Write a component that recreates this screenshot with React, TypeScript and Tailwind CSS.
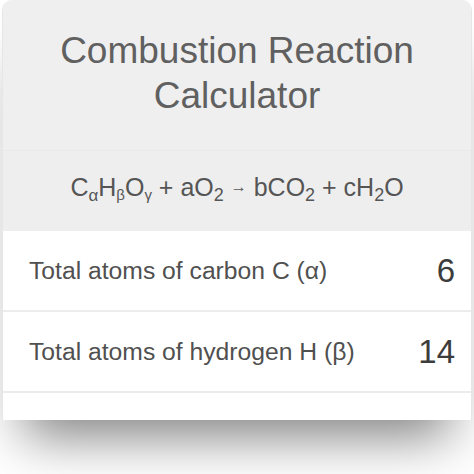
export default function App() {
  const rows = [
    { label: "Total atoms of carbon C (α)", value: "6" },
    { label: "Total atoms of hydrogen H (β)", value: "14" },
    { label: "Total atoms of oxygen O (γ)", value: "0" },
  ];

  return (
    <div
      className="h-[474px] w-[474px] overflow-hidden bg-white"
      style={{ fontFamily: '"Liberation Sans", Arial, sans-serif' }}
    >
      <div className="mx-[2px] h-[420px] overflow-hidden rounded-t-[10px] border-x border-[#e6e6e6] bg-white shadow-[0_38px_50px_-22px_rgba(0,0,0,0.5)]">
        {/* header */}
        <div className="flex h-[150px] flex-col items-center justify-center bg-[#efefef] pb-[5px] text-center text-[37px] leading-[45px] text-[#606060]">
          <div>Combustion Reaction</div>
          <div>Calculator</div>
        </div>
        <div className="flex h-[81px] items-center justify-center border-t border-[#e9e9e9] bg-[#eeeeee] pb-[6px] text-[25px] text-[#555]">
          <span>
            C<sub className="text-[17px]">α</sub>H<sub className="text-[15px]">β</sub>O
            <sub className="text-[15px]">γ</sub> + aO<sub className="text-[18px]">2</sub>{" "}
            <span className="align-[4px] text-[16px]">→</span> bCO<sub className="text-[18px]">2</sub> + cH
            <sub className="text-[18px]">2</sub>O
          </span>
        </div>

        {rows.map((r) => (
          <div
            key={r.label}
            className="flex h-[81px] items-center justify-between border-b-2 border-[#ececec] pl-[26px] pr-[16px]"
          >
            <span className="text-[24.7px] text-[#505050]">{r.label}</span>
            <span className="text-[33px] text-[#3c3c3c]">{r.value}</span>
          </div>
        ))}
      </div>
    </div>
  );
}
